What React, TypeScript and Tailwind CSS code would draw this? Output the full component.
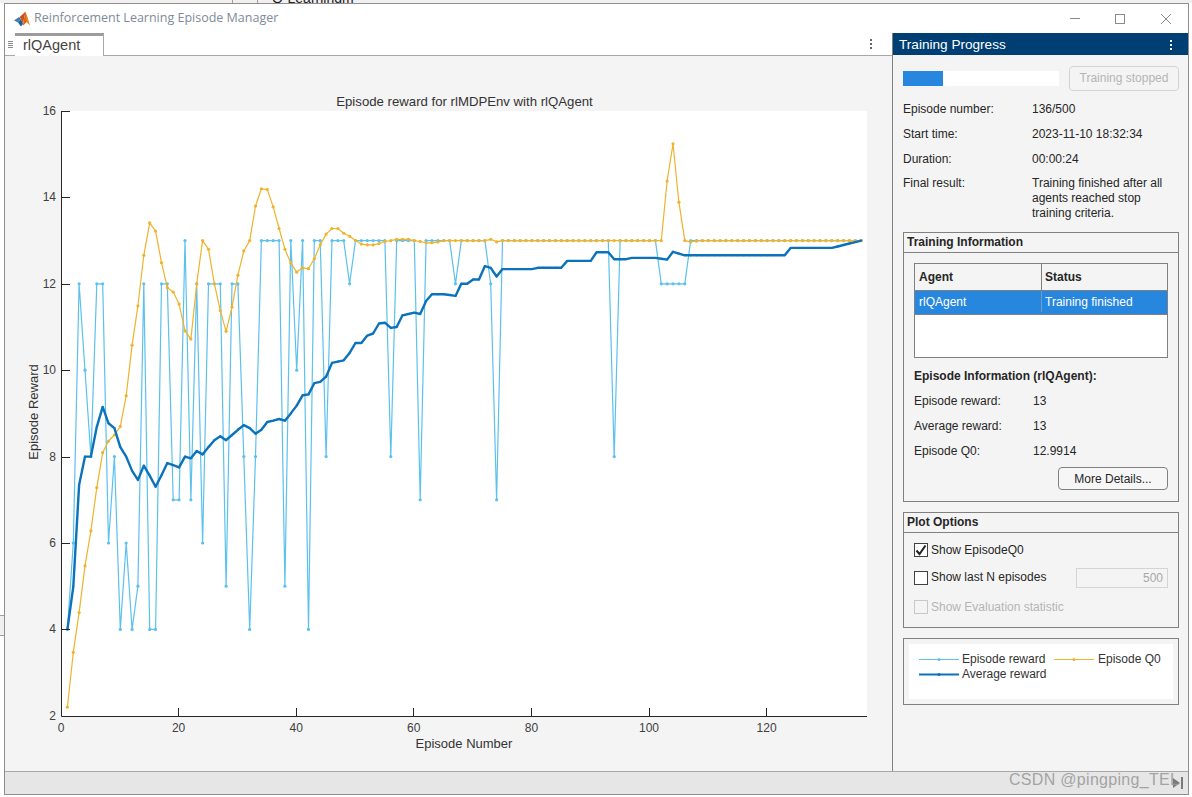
const rewardRaw = [
  4, 6, 12, 10, 8, 12, 12, 6, 8, 4, 6, 4, 5, 12, 4, 4, 12, 12, 7, 7, 13, 7, 12, 6, 12, 12, 12, 5, 12, 12, 8, 4, 8,
  13, 13, 13, 13, 5, 13, 10, 13, 4, 13, 13, 8, 13, 13, 13, 12,
];
const rewardDips: Record<number, number> = { 56: 8, 61: 7, 67: 12, 73: 12, 74: 7, 94: 8, 102: 12, 103: 12, 104: 12, 105: 12, 106: 12 };
const reward = Array.from({ length: 136 }, (_, i) => rewardRaw[i] ?? rewardDips[i + 1] ?? 13);

const q0Raw = [
  2.2, 3.47, 4.39, 5.47, 6.28, 7.28, 8.09, 8.36, 8.5, 8.7, 9.41, 10.58, 11.49, 12.66, 13.41, 13.22, 12.49, 11.91,
  11.81, 11.53, 10.91, 10.72, 12, 13, 12.8, 12, 11.38, 10.9, 11.46, 12.2, 12.76, 13, 13.8, 14.2, 14.18, 13.78, 13.28,
  12.8, 12.48, 12.27, 12.37, 12.35, 12.58, 12.9, 13.15, 13.28, 13.28, 13.17, 13.1, 13, 12.92, 12.9, 12.9, 12.93, 12.98,
  13, 13.03, 13.03, 13.03, 13, 12.98, 12.95, 12.95, 12.97, 13, 13, 13, 13, 13, 13, 13, 13, 13.03, 12.97,
];
const q0Peak: Record<number, number> = { 103: 14.38, 104: 15.24, 105: 13.89, 107: 12.97, 108: 12.99 };
const q0 = Array.from({ length: 136 }, (_, i) => q0Raw[i] ?? q0Peak[i + 1] ?? 13);

const avgRaw = [
  4, 4.99, 7.34, 8, 8, 8.69, 9.15, 8.77, 8.66, 8.22, 8, 7.67, 7.46, 7.79, 7.56, 7.3, 7.57, 7.85, 7.8, 7.75, 8, 7.96,
  8.13, 8.05, 8.22, 8.38, 8.47, 8.38, 8.5, 8.62, 8.73, 8.66, 8.53, 8.62, 8.8, 8.83, 8.87, 8.83, 9, 9.18, 9.42, 9.44,
  9.7, 9.73, 9.85, 10.17, 10.2, 10.23, 10.4, 10.63, 10.63, 10.8, 10.85, 11.08, 11.1, 10.98, 11, 11.27, 11.3, 11.33,
  11.3, 11.6, 11.76, 11.76, 11.76, 11.74, 11.72, 12, 12, 12.1, 12.1, 12.41, 12.37, 12.17, 12.34, 12.34, 12.34, 12.34,
  12.34, 12.34, 12.37, 12.37, 12.37, 12.37, 12.37, 12.53, 12.53, 12.53, 12.53, 12.53, 12.73, 12.73, 12.73, 12.57,
  12.57, 12.57, 12.6, 12.6, 12.6, 12.6, 12.6, 12.58, 12.56, 12.74, 12.7, 12.66,
];
const avg = Array.from({ length: 136 }, (_, i) => {
  const ep = i + 1;
  if (i < avgRaw.length) return avgRaw[i];
  if (ep <= 123) return 12.66;
  if (ep <= 131) return 12.83;
  return 12.83 + (ep - 131) * 0.034;
});

const px = (ep: number) => 61.5 + ep * 5.88;
const py = (v: number) => 715.8 - (v - 2) * 43.2;
const pts = (data: number[]) => data.map((v, i) => `${px(i + 1).toFixed(1)},${py(v).toFixed(1)}`).join(" ");

function Series({ data, color, width, r }: { data: number[]; color: string; width: number; r: number }) {
  return (
    <g>
      <polyline points={pts(data)} fill="none" stroke={color} strokeWidth={width} strokeLinejoin="round" />
      {data.map((v, i) => (
        <circle key={i} cx={px(i + 1)} cy={py(v)} r={r} fill={color} />
      ))}
    </g>
  );
}

function Chart() {
  return (
    <svg viewBox="5 56 887 715" width={887} height={715} className="block" fontFamily="'Liberation Sans', Arial, sans-serif">
      <rect x={62} y={111} width={805} height={605} fill="#fff" />
      <text x={464.5} y={106} fontSize={13.2} textAnchor="middle" fill="#333">
        Episode reward for rlMDPEnv with rlQAgent
      </text>
      <Series data={reward} color="#5cc1ee" width={1.2} r={1.6} />
      <Series data={q0} color="#efb32c" width={1.2} r={1.6} />
      <Series data={avg} color="#0b72bb" width={2.4} r={1} />
      <path d="M61.5 111V716.5H867" fill="none" stroke="#262626" strokeWidth={1} />
      {[2, 4, 6, 8, 10, 12, 14, 16].map((v) => (
        <g key={v}>
          {v > 2 && <line x1={62} x2={70} y1={Math.round(py(v)) + 0.5} y2={Math.round(py(v)) + 0.5} stroke="#262626" />}
          <text x={56} y={py(v) + 4} fontSize={12} textAnchor="end" fill="#404040">
            {v}
          </text>
        </g>
      ))}
      {[0, 20, 40, 60, 80, 100, 120].map((v) => (
        <g key={v}>
          {v > 0 && <line x1={Math.round(px(v)) - 0.5} x2={Math.round(px(v)) - 0.5} y1={708} y2={716} stroke="#262626" />}
          <text x={px(v) - 0.5} y={732} fontSize={12} textAnchor="middle" fill="#404040">
            {v}
          </text>
        </g>
      ))}
      <text x={464} y={748} fontSize={13} textAnchor="middle" fill="#333">
        Episode Number
      </text>
      <text transform="translate(38 412) rotate(-90)" fontSize={13} textAnchor="middle" fill="#333">
        Episode Reward
      </text>
    </svg>
  );
}

function MatlabLogo() {
  return (
    <svg viewBox="0 0 16 16" className="h-4 w-4 shrink-0">
      <path d="M0 9.5 5 6 7 8 4 11.5Z" fill="#3f7fb5" />
      <path d="M4 11.5 7 8 9 13 7 15.5Z" fill="#1f5f94" />
      <path d="M5.5 6 8.5 3.5 11.5 0.5 9 13 7 8Z" fill="#c9501f" />
      <path d="M11.5 0.5 13.5 6 16 14.5 12.5 11 9 14.5Z" fill="#e8862a" />
      <path d="M11.5 0.5 12.5 11 9 14.5Z" fill="#d8641f" />
    </svg>
  );
}

function Dots({ color }: { color: string }) {
  return (
    <span className="flex flex-col gap-[2px]">
      <span className={`h-[2px] w-[2px] ${color}`} />
      <span className={`h-[2px] w-[2px] ${color}`} />
      <span className={`h-[2px] w-[2px] ${color}`} />
    </span>
  );
}

function InfoRow({ label, value, valueClass }: { label: string; value: string; valueClass: string }) {
  return (
    <div className="flex h-[25px] items-center">
      <span className={valueClass}>{label}</span>
      <span>{value}</span>
    </div>
  );
}

function LegendLine({ color, thick }: { color: string; thick?: boolean }) {
  return (
    <svg width={40} height={5} className="shrink-0">
      <line x1={0} x2={40} y1={2.5} y2={2.5} stroke={color} strokeWidth={thick ? 2 : 1} />
      <circle cx={20} cy={2.5} r={1.5} fill={color} />
    </svg>
  );
}

function Panel() {
  return (
    <div className="flex w-[296px] shrink-0 flex-col border-l border-[#808080] bg-[#f4f4f4] text-xs text-[#262626]">
      <div className="flex h-[22px] items-center justify-between bg-[#003f73] pl-[6px] pr-[16px] pt-[2px] text-[13.6px] text-white">
        <span>Training Progress</span>
        <Dots color="bg-white" />
      </div>

      <div className="flex flex-col pl-[10px] pr-[9px] pt-[11px]">
        <div className="flex h-[25px] items-center justify-between">
          <div className="h-[15px] w-[156px] bg-white">
            <div className="h-full w-[40px] bg-[#2787df]" />
          </div>
          <button className="h-[25px] w-[110px] rounded-[4px] border border-[#d4d4d4] pb-[1px] text-[#b4b4b4]">Training stopped</button>
        </div>

        <div className="mt-[5px]">
          <InfoRow label="Episode number:" value="136/500" valueClass="w-[129px]" />
          <InfoRow label="Start time:" value="2023-11-10 18:32:34" valueClass="w-[129px]" />
          <InfoRow label="Duration:" value="00:00:24" valueClass="w-[129px]" />
          <div className="flex pt-[5px] leading-[15px]">
            <span className="w-[129px] shrink-0">Final result:</span>
            <span className="w-[140px]">Training finished after all agents reached stop training criteria.</span>
          </div>
        </div>

        <div className="mt-[11px] h-[270px] border border-[#808080]">
          <div className="flex h-[20px] items-center border-b border-[#808080] pb-[2px] pl-[3px] font-bold">Training Information</div>
          <div className="px-[10px] pt-[10px]">
            <div className="h-[95px] border border-[#808080] bg-white">
              <div className="flex h-[27px] items-center border-b border-[#808080] bg-[#f4f4f4] font-bold">
                <span className="flex h-full w-[127px] items-center border-r border-[#808080] pl-[4px]">Agent</span>
                <span className="pl-[3px]">Status</span>
              </div>
              <div className="flex h-[24px] items-center border-b border-[#808080] bg-[#2787df] pb-[2px] text-white">
                <span className="flex h-full w-[127px] items-center border-r border-[#6f9ccb] pl-[4px]">rlQAgent</span>
                <span className="pl-[3px]">Training finished</span>
              </div>
            </div>
            <div className="mt-[5px] flex h-[25px] items-center font-bold">Episode Information (rlQAgent):</div>
            <InfoRow label="Episode reward:" value="13" valueClass="w-[119px]" />
            <InfoRow label="Average reward:" value="13" valueClass="w-[119px]" />
            <InfoRow label="Episode Q0:" value="12.9914" valueClass="w-[119px]" />
            <div className="mt-[4px] flex justify-end">
              <button className="h-[23px] w-[110px] rounded-[4px] border border-[#808080] bg-[#f6f6f6]">More Details...</button>
            </div>
          </div>
        </div>

        <div className="mt-[10px] h-[116px] border border-[#808080]">
          <div className="flex h-[20px] items-center border-b border-[#808080] pb-[2px] pl-[3px] font-bold">Plot Options</div>
          <div className="px-[10px] pt-[9px]">
            <div className="flex h-[16px] items-center gap-[3px]">
              <span className="flex h-[14px] w-[14px] items-center justify-center border border-[#404040] bg-white">
                <svg viewBox="0 0 12 12" className="h-3 w-3">
                  <path d="M1.5 6.5 4.5 10 10.5 1.5" fill="none" stroke="#222" strokeWidth={2} />
                </svg>
              </span>
              Show EpisodeQ0
            </div>
            <div className="mt-[10px] flex h-[20px] items-center">
              <span className="mr-[3px] h-[14px] w-[14px] border border-[#404040] bg-white" />
              <span className="flex-1 pb-[3px]">Show last N episodes</span>
              <span className="flex h-[20px] w-[92px] items-center justify-end border border-[#d4d4d4] pr-[4px] text-[#a8a8a8]">500</span>
            </div>
            <div className="mt-[11px] flex h-[16px] items-center gap-[3px] text-[#b4b4b4]">
              <span className="h-[14px] w-[14px] border border-[#c8c8c8]" />
              Show Evaluation statistic
            </div>
          </div>
        </div>

        <div className="mt-[10px] h-[67px] border border-[#808080] p-[5px]">
          <div className="h-[55px] bg-white pl-[10px] pt-[8px] leading-[15px] text-[#333]">
            <div className="flex items-center">
              <LegendLine color="#5cc1ee" />
              <span className="ml-[3px] w-[92px]">Episode reward</span>
              <LegendLine color="#efb32c" />
              <span className="ml-[4px]">Episode Q0</span>
            </div>
            <div className="flex items-center">
              <LegendLine color="#0b72bb" thick />
              <span className="ml-[3px]">Average reward</span>
            </div>
          </div>
        </div>
      </div>
    </div>
  );
}

export default function App() {
  return (
    <div className="relative flex h-[797px] w-[1192px] flex-col overflow-hidden bg-white font-['Liberation_Sans',Arial,sans-serif]">
      <div className="flex h-[3px] shrink-0 overflow-hidden bg-[#f0f0f0]">
        <div className="ml-[232px] h-full w-[1px] bg-[#a0a0a0]" />
        <div className="ml-[24px] h-full w-[1px] bg-[#a0a0a0]" />
        <span className="-mt-[12px] ml-[14px] text-sm text-[#222]">Q-Learningm</span>
      </div>

      <div className="flex min-h-0 flex-1">
        <div className="flex w-[4px] shrink-0 flex-col">
          <div className="h-[612px] bg-white" />
          <div className="h-[21px] border-y border-[#a0a0a0] bg-[#f0f0f0]" />
        </div>

        <div className="flex w-[1185px] shrink-0 flex-col border border-[#8f8f8f] bg-white">
          <div className="flex h-[29px] shrink-0 items-center pl-[9px]">
            <MatlabLogo />
            <span className="ml-[4px] font-['Open_Sans',sans-serif] text-[12.5px] text-[#7e8b98]">Reinforcement Learning Episode Manager</span>
            <div className="ml-auto flex items-center pr-[17px]">
              <span className="h-[1px] w-[10px] bg-[#8a8a8a]" />
              <span className="ml-[35px] h-[10px] w-[10px] border border-[#8a8a8a]" />
              <svg viewBox="0 0 10 10" className="ml-[36px] h-[10px] w-[10px]">
                <path d="M0 0 10 10M10 0 0 10" stroke="#8a8a8a" strokeWidth={1} />
              </svg>
            </div>
          </div>

          <div className="flex min-h-0 flex-1">
            <div className="flex min-w-0 flex-1 flex-col">
              <div className="flex h-[23px] shrink-0 items-stretch border-b border-[#a8a8a8]">
                <div className="flex w-[10px] flex-col items-center justify-center gap-[1px] pl-[1px]">
                  <span className="h-[1px] w-[5px] bg-[#8a8a8a]" />
                  <span className="h-[1px] w-[5px] bg-[#8a8a8a]" />
                  <span className="h-[1px] w-[5px] bg-[#8a8a8a]" />
                  <span className="h-[1px] w-[5px] bg-[#8a8a8a]" />
                </div>
                <div className="flex h-[23px] w-[89px] items-center border-r border-t-[3px] border-r-[#a8a8a8] border-t-[#9c9c9c] bg-white pl-[8px] text-[14.5px] text-[#444]">
                  rlQAgent
                </div>
                <div className="ml-auto flex items-center pr-[20px]">
                  <Dots color="bg-[#666]" />
                </div>
              </div>
              <div className="min-h-0 flex-1 bg-[#f4f4f4]">
                <Chart />
              </div>
            </div>
            <Panel />
          </div>

          <div className="flex h-[23px] shrink-0 items-center justify-end border-t border-[#a8a8a8] bg-[#e6e6e6] pr-[5px]">
            <svg viewBox="0 0 10 12" className="h-3 w-[10px]">
              <path d="M0 1 7 6 0 11Z" fill="#7a7a7a" />
              <rect x={8} y={0} width={2} height={12} fill="#7a7a7a" />
            </svg>
          </div>
        </div>
      </div>
      <div className="h-[2px] shrink-0" />

      <span className="absolute left-[1009px] top-[768px] text-base tracking-[0.3px] text-[#9a9a9a]/90">CSDN @pingping_TEL</span>
    </div>
  );
}
